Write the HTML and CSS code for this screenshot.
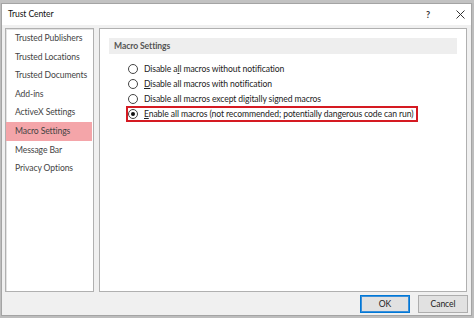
FILE: index.html
```html
<!DOCTYPE html>
<html>
<head>
<meta charset="utf-8">
<link rel="stylesheet" href="styles.css">
</head>
<body>
<div class="backdrop"></div>
<div class="dialog">
  <div class="titlebar">
    <span class="title">Trust Center</span>
    <span class="help">?</span>
    <span class="close"><svg width="9" height="9" viewBox="0 0 9 9"><path d="M0.5 0.5 L8.5 8.5 M8.5 0.5 L0.5 8.5" stroke="#333" stroke-width="1" fill="none"/></svg></span>
  </div>
  <div class="body">
    <div class="panels">
      <ul class="nav">
        <li>Trusted Publishers</li>
        <li>Trusted Locations</li>
        <li>Trusted Documents</li>
        <li>Add-ins</li>
        <li>ActiveX Settings</li>
        <li class="active">Macro Settings</li>
        <li>Message Bar</li>
        <li>Privacy Options</li>
      </ul>
      <div class="content">
        <div class="section-head">Macro Settings</div>
        <div class="options">
          <div class="opt"><span class="radio"></span><span>Disable a<u>l</u>l macros without notification</span></div>
          <div class="opt"><span class="radio"></span><span><u>D</u>isable all macros with notification</span></div>
          <div class="opt"><span class="radio"></span><span>Disable all macros except di<u>g</u>itally signed macros</span></div>
          <div class="opt selected"><span class="radio on"></span><span><u>E</u>nable all macros (not recommended; potentially dangerous code can run)</span></div>
        </div>
      </div>
    </div>
    <div class="buttons">
      <button class="btn default">OK</button>
      <button class="btn">Cancel</button>
    </div>
  </div>
</div>
</body>
</html>
```
FILE: styles.css
```css
* { box-sizing: border-box; }
html, body { margin: 0; padding: 0; }
body {
  width: 474px;
  height: 318px;
  background: #bdbdbd;
  font-family: Lato, "Noto Sans", sans-serif;
  font-size: 8.6px;
  letter-spacing: -0.1px;
  color: #222;
  overflow: hidden;
}
.backdrop { height: 3px; background: #c2c2c2; }
.dialog {
  margin-left: 1px;
  width: 471px;
  height: 313px;
  background: #f0f0f0;
  border: 1px solid #a4a4a4;
  display: flex;
  flex-direction: column;
}
.titlebar {
  height: 21px;
  background: #fff;
  display: flex;
  align-items: center;
  padding: 0 0 1px 6px;
}
.title { flex: 1; color: #111; }
.help { width: 30px; font-size: 9px; font-weight: bold; color: #333; }
.close { width: 15px; display: flex; }
.body {
  flex: 1;
  display: flex;
  flex-direction: column;
  padding: 3px 0 0 3px;
}
.panels {
  height: 264px;
  display: flex;
  gap: 5px;
}
.nav {
  list-style: none;
  margin: 0;
  padding: 0;
  width: 89px;
  background: #fff;
  border: 1px solid #b0b0b0;
  box-shadow: inset 1px 1px 0 #e3e3e3;
}
.nav li {
  height: 18.6px;
  line-height: 18.6px;
  padding-left: 9px;
  color: #444;
  white-space: nowrap;
}
.nav li.active { background: #f4a5a9; margin-right: 1px; }
.content {
  width: 368px;
  background: #fff;
  border: 1px solid #b0b0b0;
  padding: 9px 9px 0 9px;
}
.section-head {
  height: 16px;
  line-height: 16px;
  background: #eeeeee;
  padding-left: 5px;
  font-weight: 700;
  color: #555;
}
.options {
  padding: 7px 0 0 17px;
  display: flex;
  flex-direction: column;
}
.opt {
  height: 15px;
  display: flex;
  align-items: center;
  gap: 6px;
  padding-left: 2px;
  color: #222;
  white-space: nowrap;
}
.opt.selected {
  width: 292px;
  border: 2px solid #d51a22;
  padding-left: 0;
  height: 16px;
}
.radio {
  width: 10px;
  height: 10px;
  border: 1px solid #444;
  border-radius: 50%;
  background: #fff;
  display: inline-block;
  position: relative;
  flex: none;
}
.radio.on::after {
  content: "";
  position: absolute;
  left: 2px; top: 2px;
  width: 4px; height: 4px;
  border-radius: 50%;
  background: #111;
}
u { text-decoration-thickness: 1px; text-underline-offset: 1px; }
.buttons {
  flex: 1;
  display: flex;
  justify-content: flex-end;
  align-items: center;
  gap: 8px;
  padding: 1px 3px 0 0;
}
.btn {
  width: 50px;
  height: 18px;
  background: #e1e1e1;
  border: 1px solid #adadad;
  font-family: inherit;
  font-size: 8.6px;
  letter-spacing: -0.1px;
  color: #222;
  padding: 0;
}
.btn.default { border: 1px solid #0078d7; box-shadow: inset 0 0 0 1px #3c8fd8; }
```
